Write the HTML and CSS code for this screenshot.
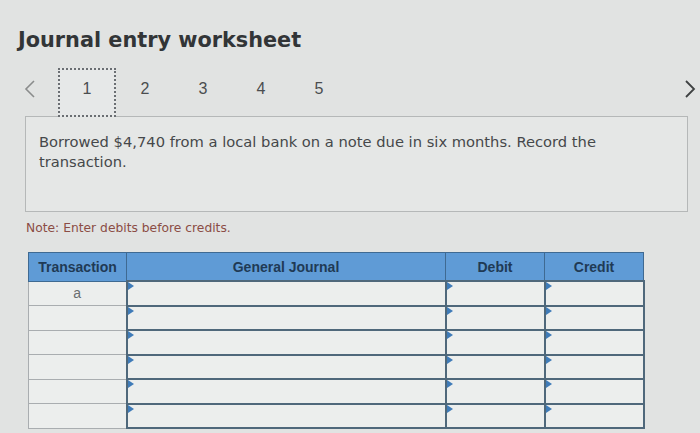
FILE: index.html
```html
<!DOCTYPE html>
<html lang="en">
    <head>
        <meta charset="UTF-8">
        <title>Journal entry worksheet</title>
        <link rel="stylesheet" href="styles.css">
    </head>
    <body>
        <h1 class="title">Journal entry worksheet</h1>

        <div class="pager">
            <span class="pager-arrow">
                <svg width="12" height="18" viewBox="0 0 12 18"><path d="M10 1 L2 9 L10 17" fill="none" stroke="#8a8c8c" stroke-width="1.6"/></svg>
            </span>
            <span class="pager-item current">1</span>
            <span class="pager-item">2</span>
            <span class="pager-item">3</span>
            <span class="pager-item">4</span>
            <span class="pager-item">5</span>
            <span class="pager-spacer"></span>
            <span class="pager-arrow next">
                <svg width="12" height="18" viewBox="0 0 12 18"><path d="M2 1 L10 9 L2 17" fill="none" stroke="#3e4142" stroke-width="1.8"/></svg>
            </span>
        </div>

        <div class="question">
            Borrowed $4,740 from a local bank on a note due in six months. Record the transaction.
        </div>

        <p class="note">Note: Enter debits before credits.</p>

        <table class="journal">
            <thead>
                <tr>
                    <th class="col-trans">Transaction</th>
                    <th class="col-journal">General Journal</th>
                    <th class="col-amt">Debit</th>
                    <th class="col-amt">Credit</th>
                </tr>
            </thead>
            <tbody>
                <tr><td class="trans">a</td><td class="field"></td><td class="field"></td><td class="field"></td></tr>
                <tr><td class="trans"></td><td class="field"></td><td class="field"></td><td class="field"></td></tr>
                <tr><td class="trans"></td><td class="field"></td><td class="field"></td><td class="field"></td></tr>
                <tr><td class="trans"></td><td class="field"></td><td class="field"></td><td class="field"></td></tr>
                <tr><td class="trans"></td><td class="field"></td><td class="field"></td><td class="field"></td></tr>
                <tr><td class="trans"></td><td class="field"></td><td class="field"></td><td class="field"></td></tr>
            </tbody>
        </table>
    </body>
</html>
```

FILE: styles.css
```css
body {
    margin: 0;
    padding: 0;
    background-color: #e1e3e2;
    font-family: "DejaVu Sans", Verdana, sans-serif;
    color: #3f4244;
}

.title {
    margin: 0;
    padding: 27px 0 0 18px;
    font-size: 20.8px;
    font-weight: bold;
    color: #323537;
    line-height: 26px;
}

.pager {
    display: flex;
    align-items: center;
    margin-top: 15px;
    height: 49px;
    padding-left: 24px;
    padding-right: 4px;
    font-family: "Liberation Sans", Arial, sans-serif;
    font-size: 16px;
    color: #4a4d4f;
}

.pager-arrow {
    width: 12px;
    display: flex;
    align-items: center;
    padding-bottom: 8px;
}

.pager-item {
    width: 58px;
    height: 49px;
    display: flex;
    align-items: center;
    justify-content: center;
    box-sizing: border-box;
    padding-bottom: 8px;
}

.pager-arrow + .pager-item {
    margin-left: 22px;
}

.pager-item.current {
    border: 2px dotted #6a6e72;
    background: #e6e8e8;
}

.pager-spacer {
    flex: 1;
}

.question {
    margin: -1px 12px 0 25px;
    height: 96px;
    box-sizing: border-box;
    border: 1px solid #b5b8b8;
    background: #e5e7e6;
    padding: 15px 60px 0 13px;
    font-size: 14.7px;
    line-height: 20px;
    color: #45484a;
}

.note {
    margin: 8px 0 0 26px;
    font-size: 12.3px;
    line-height: 16px;
    color: #8b4d45;
}

.journal {
    margin: 16px 0 0 28px;
    border-collapse: collapse;
    font-family: "Liberation Sans", Arial, sans-serif;
    font-size: 14px;
}

.journal th {
    background: #5f9bd6;
    border: 1px solid #3f6a92;
    height: 27px;
    padding: 0;
    font-weight: bold;
    color: #1f3a55;
}

.col-trans { width: 97px; }
.col-journal { width: 318px; }
.col-amt { width: 98px; }

.journal td {
    height: 22.5px;
    padding: 0;
    background: #eceeed;
}

.journal td.trans {
    border: 1px solid #a9adb0;
    text-align: center;
    color: #6a6d70;
    font-size: 14px;
}

.journal td.field {
    position: relative;
    border: 2px solid #4f687b;
}

.journal td.field::before {
    content: "";
    position: absolute;
    left: 0;
    top: 0;
    border-left: 6px solid #3f7bb8;
    border-top: 4px solid transparent;
    border-bottom: 4px solid transparent;
}
```
